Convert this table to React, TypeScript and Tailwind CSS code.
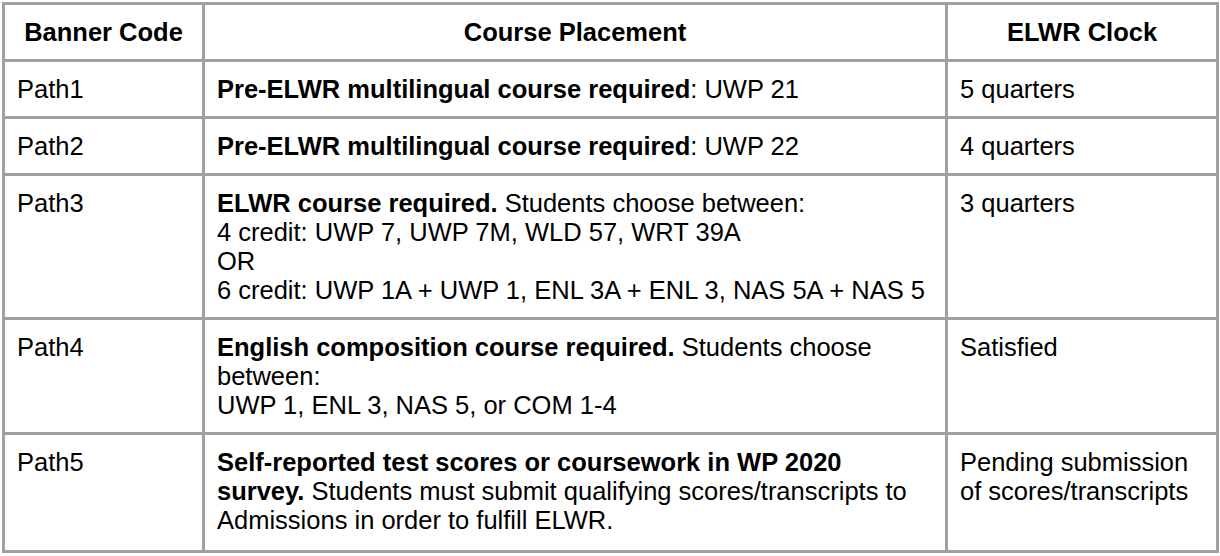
import React from 'react'

type Row = {
  code: string
  placement: React.ReactNode
  clock: React.ReactNode
}

const rows: Row[] = [
  {
    code: 'Path1',
    placement: (
      <>
        <b>Pre-ELWR multilingual course required</b>: UWP 21
      </>
    ),
    clock: '5 quarters',
  },
  {
    code: 'Path2',
    placement: (
      <>
        <b>Pre-ELWR multilingual course required</b>: UWP 22
      </>
    ),
    clock: '4 quarters',
  },
  {
    code: 'Path3',
    placement: (
      <>
        <b>ELWR course required.</b> Students choose between:
        <br />
        4 credit: UWP 7, UWP 7M, WLD 57, WRT 39A
        <br />
        OR
        <br />
        6 credit: UWP 1A + UWP 1, ENL 3A + ENL 3, NAS 5A + NAS 5
      </>
    ),
    clock: '3 quarters',
  },
  {
    code: 'Path4',
    placement: (
      <>
        <b>English composition course required.</b> Students choose
        <br />
        between:
        <br />
        UWP 1, ENL 3, NAS 5, or COM 1-4
      </>
    ),
    clock: 'Satisfied',
  },
  {
    code: 'Path5',
    placement: (
      <>
        <b>Self-reported test scores or coursework in WP 2020</b>
        <br />
        <b>survey.</b> Students must submit qualifying scores/transcripts to
        <br />
        Admissions in order to fulfill ELWR.
      </>
    ),
    clock: (
      <>
        Pending submission
        <br />
        of scores/transcripts
      </>
    ),
  },
]

const cell = 'border-[3px] border-[#a0a0a0] px-3 pt-[13px] pb-[12px] align-top whitespace-nowrap'
const lastCell = 'border-[3px] border-[#a0a0a0] px-3 pt-[13px] pb-[15px] align-top whitespace-nowrap'

export default function App() {
  return (
    <div className="bg-white w-[1220px] h-[556px] pt-[2px] pl-[2px] font-['Liberation_Sans',Arial,sans-serif] text-[25.5px] leading-[29px] text-black">
      <table className="table-fixed border-collapse w-[1217px]">
        <colgroup>
          <col className="w-[200px]" />
          <col className="w-[743px]" />
          <col />
        </colgroup>
        <thead>
          <tr>
            <th className={`${cell} text-center font-bold`}>Banner Code</th>
            <th className={`${cell} text-center font-bold`}>Course Placement</th>
            <th className={`${cell} text-center font-bold`}>ELWR Clock</th>
          </tr>
        </thead>
        <tbody>
          {rows.map((row, i) => {
            // the last row sits a little taller in the original
            const c = i === rows.length - 1 ? lastCell : cell
            return (
              <tr key={row.code}>
                <td className={c}>{row.code}</td>
                <td className={c}>{row.placement}</td>
                <td className={c}>{row.clock}</td>
              </tr>
            )
          })}
        </tbody>
      </table>
    </div>
  )
}
